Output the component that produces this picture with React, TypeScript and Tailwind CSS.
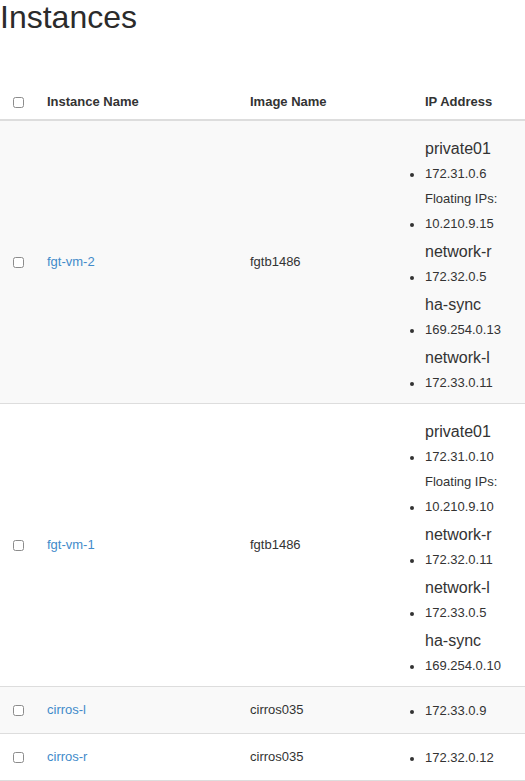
import React from "react";

type Net = { name?: string; ips: string[]; floating?: string[] };

type Instance = {
  name: string;
  image: string;
  nets: Net[];
};

const INSTANCES: Instance[] = [
  {
    name: "fgt-vm-2",
    image: "fgtb1486",
    nets: [
      { name: "private01", ips: ["172.31.0.6"], floating: ["10.210.9.15"] },
      { name: "network-r", ips: ["172.32.0.5"] },
      { name: "ha-sync", ips: ["169.254.0.13"] },
      { name: "network-l", ips: ["172.33.0.11"] },
    ],
  },
  {
    name: "fgt-vm-1",
    image: "fgtb1486",
    nets: [
      { name: "private01", ips: ["172.31.0.10"], floating: ["10.210.9.10"] },
      { name: "network-r", ips: ["172.32.0.11"] },
      { name: "network-l", ips: ["172.33.0.5"] },
      { name: "ha-sync", ips: ["169.254.0.10"] },
    ],
  },
  { name: "cirros-l", image: "cirros035", nets: [{ ips: ["172.33.0.9"] }] },
  { name: "cirros-r", image: "cirros035", nets: [{ ips: ["172.32.0.12"] }] },
];

const COLS = "grid grid-cols-[39px_203px_175px_1fr]";

function Checkbox() {
  return (
    <span className="block w-[11px] h-[11px] rounded-[2.5px] border border-[#8c8c8c] bg-white" />
  );
}

function Ip({ value }: { value: string }) {
  return (
    <li className="relative leading-[25px]">
      <span className="absolute left-[-15px] top-[12px] w-[4px] h-[4px] rounded-full bg-[#333]" />
      {value}
    </li>
  );
}

function Addresses({ nets }: { nets: Net[] }) {
  const single = nets.length === 1 && !nets[0].name;
  return (
    <div className={single ? "pl-2 pt-[11px] pb-[10px]" : "pl-2 pt-[15px] pb-[8px]"}>
      {nets.map((n, i) => (
        <div key={i} className={i > 0 ? "mt-[3px]" : ""}>
          {n.name && <div className="text-[16px] leading-[25px] text-[#333]">{n.name}</div>}
          <ul>
            {n.ips.map((ip) => (
              <Ip key={ip} value={ip} />
            ))}
          </ul>
          {n.floating && (
            <>
              <div className="leading-[25px]">Floating IPs:</div>
              <ul>
                {n.floating.map((ip) => (
                  <Ip key={ip} value={ip} />
                ))}
              </ul>
            </>
          )}
        </div>
      ))}
    </div>
  );
}

export default function App() {
  return (
    <div className="w-[525px] min-h-[781px] bg-white text-[#333] text-[13px] font-['Liberation_Sans',Arial,sans-serif]">
      <h1 className="text-[32px] leading-[35px] font-normal text-[#2b2b2b]">Instances</h1>

      <div className="mt-[49px]">
        <div className={`${COLS} items-center pt-2 pb-[7px] border-b-2 border-[#ddd] font-bold leading-5`}>
          <div className="pl-[13px]">
            <Checkbox />
          </div>
          <div className="pl-2">Instance Name</div>
          <div className="pl-2">Image Name</div>
          <div className="pl-2">IP Address</div>
        </div>

        {INSTANCES.map((inst, i) => (
          <div
            key={inst.name}
            className={`${COLS} items-center border-b border-[#ddd] ${i % 2 === 0 ? "bg-[#f9f9f9]" : "bg-white"}`}
          >
            <div className="pl-[13px]">
              <Checkbox />
            </div>
            <div className="pl-2 leading-5">
              <a href="#" className="text-[#428bca]">
                {inst.name}
              </a>
            </div>
            <div className="pl-2 leading-5">{inst.image}</div>
            <Addresses nets={inst.nets} />
          </div>
        ))}
      </div>
    </div>
  );
}
